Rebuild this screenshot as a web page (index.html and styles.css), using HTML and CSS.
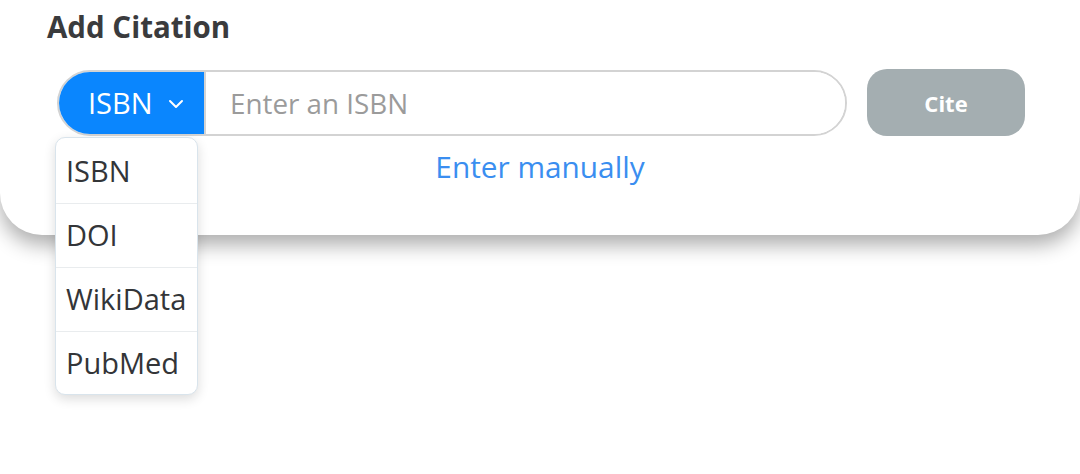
FILE: index.html
```html
<!DOCTYPE html>
<html lang="en">
<head>
<meta charset="utf-8">
<title>Add Citation</title>
<link rel="stylesheet" href="styles.css">
</head>
<body>
<div class="card">
  <h2 class="title">Add Citation</h2>
  <div class="row">
    <div class="group">
      <button class="type-btn" type="button">
        <span>ISBN</span>
        <svg class="chev" width="16" height="10" viewBox="0 0 16 10"><path d="M2 2 L8 8 L14 2" fill="none" stroke="#fff" stroke-width="2" stroke-linecap="round" stroke-linejoin="round"/></svg>
      </button>
      <input class="field" type="text" placeholder="Enter an ISBN">
      <ul class="menu">
        <li>ISBN</li>
        <li>DOI</li>
        <li>WikiData</li>
        <li>PubMed</li>
      </ul>
    </div>
    <button class="cite" type="button">Cite</button>
  </div>
  <div class="manual"><a href="#">Enter manually</a></div>
</div>
</body>
</html>
```

FILE: styles.css
```css
html, body {
  margin: 0;
  padding: 0;
  background: #ffffff;
  font-family: "Open Sans", "Noto Sans", sans-serif;
}

body {
  min-height: 474px;
}

.card {
  width: 1080px;
  background: #ffffff;
  border-radius: 0 0 42px 42px;
  box-shadow: 0 10px 20px rgba(0, 0, 0, 0.32);
  padding: 10px 0 50px 0;
  box-sizing: border-box;
}

.title {
  margin: 0;
  padding-left: 47px;
  font-size: 29.5px;
  line-height: 34px;
  font-weight: 700;
  color: #3a3b3d;
}

.row {
  display: flex;
  align-items: center;
  gap: 20px;
  margin-top: 25px;
  padding-left: 57px;
}

.group {
  position: relative;
  display: flex;
  width: 790px;
  height: 66px;
  box-sizing: border-box;
  border: 2px solid #d3d3d3;
  border-radius: 33px;
}

.type-btn {
  display: flex;
  align-items: center;
  gap: 15px;
  width: 147px;
  height: 62px;
  padding: 0 0 0 29px;
  margin: 0;
  box-sizing: border-box;
  border: 0;
  border-right: 2px solid #d3d3d3;
  border-radius: 31px 0 0 31px;
  background: #0a86fe;
  color: #ffffff;
  font-family: inherit;
  font-size: 29px;
  line-height: 62px;
}

.chev {
  display: block;
  margin-top: 2px;
}

.field {
  flex: 1;
  min-width: 0;
  height: 62px;
  border: 0;
  margin: 0;
  padding: 0 0 0 24px;
  border-radius: 0 31px 31px 0;
  background: #ffffff;
  font-family: inherit;
  font-size: 27.8px;
  color: #333;
  outline: none;
}

.field::placeholder {
  color: #9b9b9b;
}

.cite {
  width: 158px;
  height: 67px;
  border: 0;
  border-radius: 20px;
  background: #a4aeb1;
  color: #ffffff;
  font-family: inherit;
  font-weight: 700;
  font-size: 22px;
}

.manual {
  margin-top: 13px;
  text-align: center;
  font-size: 29.8px;
  line-height: 36px;
}

.manual a {
  color: #3a8ef0;
  text-decoration: none;
}

.menu {
  position: absolute;
  top: calc(100% + 3px);
  left: -4px;
  width: 141px;
  margin: 0;
  padding: 2px 0 0 0;
  list-style: none;
  background: #ffffff;
  border: 1px solid #d9e4ec;
  border-radius: 10px;
  box-shadow: 0 4px 12px rgba(0, 0, 0, 0.14);
  z-index: 2;
}

.menu li {
  height: 63px;
  line-height: 62px;
  padding-left: 10px;
  font-size: 29px;
  color: #333538;
  border-bottom: 1px solid #e9ecee;
}

.menu li:last-child {
  height: 62px;
  border-bottom: 0;
}
```
